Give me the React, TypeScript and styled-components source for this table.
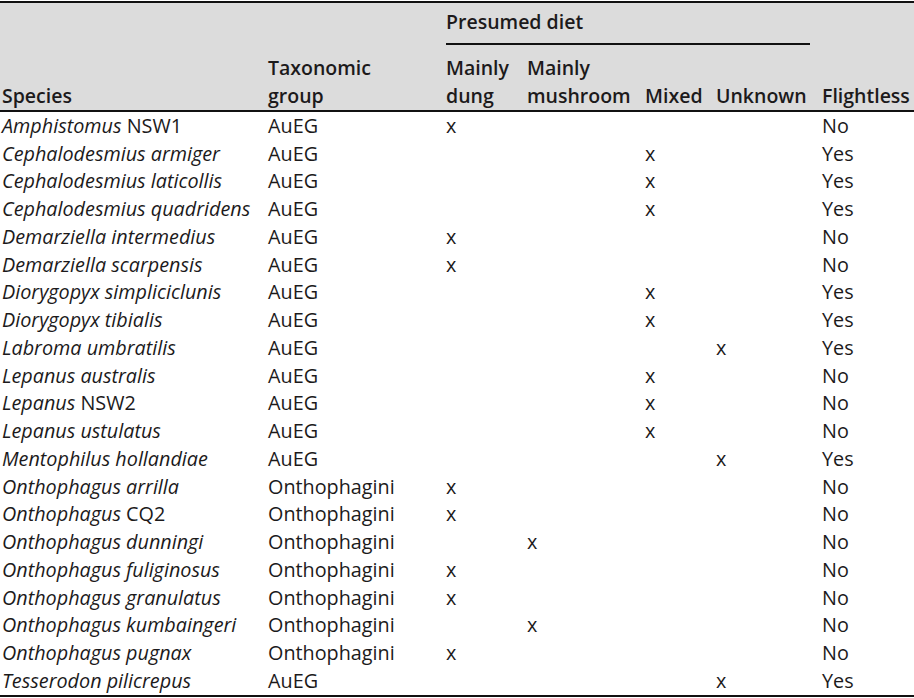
import styled, { createGlobalStyle } from 'styled-components';

type Diet = 'dung' | 'mushroom' | 'mixed' | 'unknown';

type Row = {
  genus: string;
  epithet: string;
  italicEpithet: boolean;
  group: string;
  diet: Diet;
  flightless: boolean;
};

const rows: Row[] = [
  { genus: 'Amphistomus', epithet: 'NSW1', italicEpithet: false, group: 'AuEG', diet: 'dung', flightless: false },
  { genus: 'Cephalodesmius', epithet: 'armiger', italicEpithet: true, group: 'AuEG', diet: 'mixed', flightless: true },
  { genus: 'Cephalodesmius', epithet: 'laticollis', italicEpithet: true, group: 'AuEG', diet: 'mixed', flightless: true },
  { genus: 'Cephalodesmius', epithet: 'quadridens', italicEpithet: true, group: 'AuEG', diet: 'mixed', flightless: true },
  { genus: 'Demarziella', epithet: 'intermedius', italicEpithet: true, group: 'AuEG', diet: 'dung', flightless: false },
  { genus: 'Demarziella', epithet: 'scarpensis', italicEpithet: true, group: 'AuEG', diet: 'dung', flightless: false },
  { genus: 'Diorygopyx', epithet: 'simpliciclunis', italicEpithet: true, group: 'AuEG', diet: 'mixed', flightless: true },
  { genus: 'Diorygopyx', epithet: 'tibialis', italicEpithet: true, group: 'AuEG', diet: 'mixed', flightless: true },
  { genus: 'Labroma', epithet: 'umbratilis', italicEpithet: true, group: 'AuEG', diet: 'unknown', flightless: true },
  { genus: 'Lepanus', epithet: 'australis', italicEpithet: true, group: 'AuEG', diet: 'mixed', flightless: false },
  { genus: 'Lepanus', epithet: 'NSW2', italicEpithet: false, group: 'AuEG', diet: 'mixed', flightless: false },
  { genus: 'Lepanus', epithet: 'ustulatus', italicEpithet: true, group: 'AuEG', diet: 'mixed', flightless: false },
  { genus: 'Mentophilus', epithet: 'hollandiae', italicEpithet: true, group: 'AuEG', diet: 'unknown', flightless: true },
  { genus: 'Onthophagus', epithet: 'arrilla', italicEpithet: true, group: 'Onthophagini', diet: 'dung', flightless: false },
  { genus: 'Onthophagus', epithet: 'CQ2', italicEpithet: false, group: 'Onthophagini', diet: 'dung', flightless: false },
  { genus: 'Onthophagus', epithet: 'dunningi', italicEpithet: true, group: 'Onthophagini', diet: 'mushroom', flightless: false },
  { genus: 'Onthophagus', epithet: 'fuliginosus', italicEpithet: true, group: 'Onthophagini', diet: 'dung', flightless: false },
  { genus: 'Onthophagus', epithet: 'granulatus', italicEpithet: true, group: 'Onthophagini', diet: 'dung', flightless: false },
  { genus: 'Onthophagus', epithet: 'kumbaingeri', italicEpithet: true, group: 'Onthophagini', diet: 'mushroom', flightless: false },
  { genus: 'Onthophagus', epithet: 'pugnax', italicEpithet: true, group: 'Onthophagini', diet: 'dung', flightless: false },
  { genus: 'Tesserodon', epithet: 'pilicrepus', italicEpithet: true, group: 'AuEG', diet: 'unknown', flightless: true },
];

const diets: Diet[] = ['dung', 'mushroom', 'mixed', 'unknown'];

function App() {
  return (
    <>
      <GlobalStyle />
      <Table>
        <colgroup>
          <col style={{ width: 266 }} />
          <col style={{ width: 178 }} />
          <col style={{ width: 81 }} />
          <col style={{ width: 118 }} />
          <col style={{ width: 71 }} />
          <col style={{ width: 106 }} />
          <col style={{ width: 94 }} />
        </colgroup>
        <thead>
          <tr>
            <HeadCell rowSpan={2}>Species</HeadCell>
            <HeadCell rowSpan={2}>
              Taxonomic
              <br />
              group
            </HeadCell>
            <GroupCell colSpan={4}>
              <GroupLabel>Presumed diet</GroupLabel>
            </GroupCell>
            <HeadCell rowSpan={2}>Flightless</HeadCell>
          </tr>
          <tr>
            <HeadCell>
              Mainly
              <br />
              dung
            </HeadCell>
            <HeadCell>
              Mainly
              <br />
              mushroom
            </HeadCell>
            <HeadCell>Mixed</HeadCell>
            <HeadCell>Unknown</HeadCell>
          </tr>
        </thead>
        <tbody>
          {rows.map((row) => (
            <tr key={row.genus + row.epithet}>
              <Cell>
                <i>{row.genus}</i>{' '}
                {row.italicEpithet ? <i>{row.epithet}</i> : row.epithet}
              </Cell>
              <Cell>{row.group}</Cell>
              {diets.map((d) => (
                <Cell key={d}>{row.diet === d ? 'x' : ''}</Cell>
              ))}
              <Cell>{row.flightless ? 'Yes' : 'No'}</Cell>
            </tr>
          ))}
        </tbody>
      </Table>
    </>
  );
}

export default App;

/** style **/
const GlobalStyle = createGlobalStyle`
  html, body {
    margin: 0;
    padding: 0;
    background: #ffffff;
  }
  body {
    font-family: "Open Sans", "Noto Sans", sans-serif;
    color: #1c1a1b;
  }
`;

const Table = styled.table`
  width: 914px;
  table-layout: fixed;
  border-collapse: collapse;
  margin-top: 1px;
  font-size: 19.8px;
  border-top: 2px solid #111111;
  border-bottom: 2px solid #111111;

  thead {
    background: #dcdcdc;
    border-bottom: 2px solid #111111;
  }
`;

const HeadCell = styled.th`
  text-align: left;
  vertical-align: bottom;
  font-size: 19.5px;
  font-weight: 600;
  line-height: 28px;
  padding: 0 0 0 2px;
  white-space: nowrap;
`;

const GroupCell = styled.th`
  text-align: left;
  vertical-align: top;
  font-size: 19.5px;
  font-weight: 600;
  padding: 5px 10px 9px 2px;
`;

const GroupLabel = styled.div`
  border-bottom: 2px solid #111111;
  line-height: 28px;
  padding-bottom: 7px;
`;

const Cell = styled.td`
  height: 27.76px;
  padding: 0 0 0 2px;
  line-height: 22px;
  vertical-align: middle;
  white-space: nowrap;
`;
